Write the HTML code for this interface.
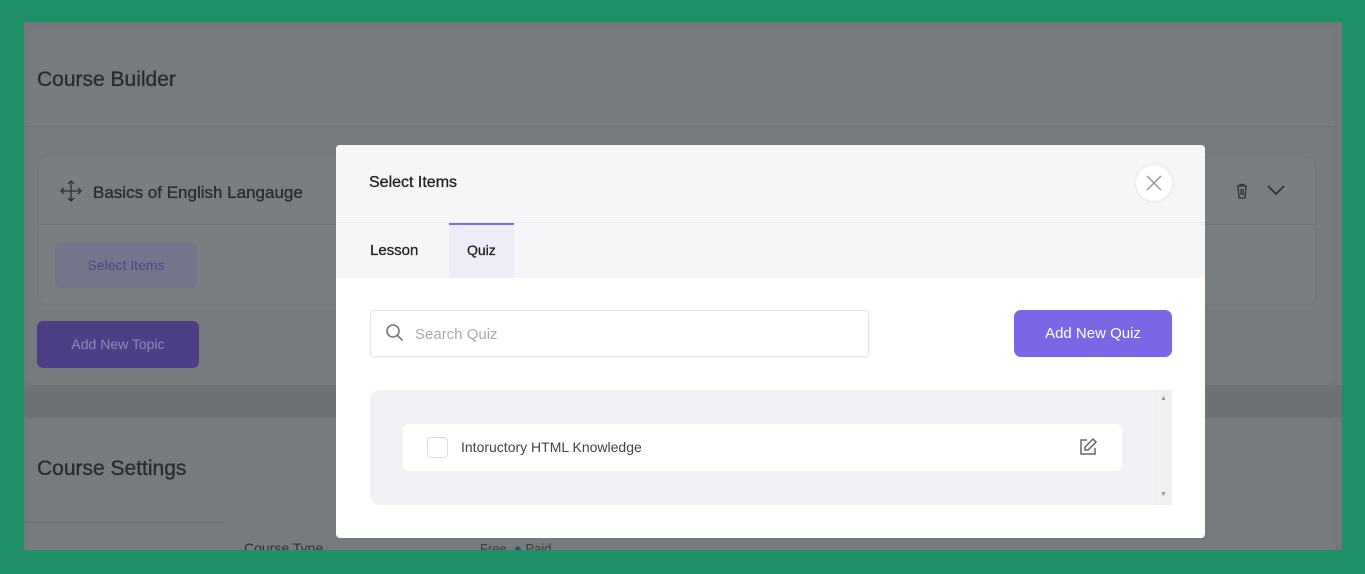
<!DOCTYPE html>
<html><head><style>
*{box-sizing:border-box;margin:0;padding:0}
body{width:1365px;height:574px;background:#20906a;position:relative;overflow:hidden;font-family:"Liberation Sans",sans-serif}
.page{position:absolute;left:24px;top:22px;width:1318px;height:528px;background:#75787b;overflow:hidden}
.abs{position:absolute}
.card{position:absolute;background:#7a7d80;border-radius:8px}
.t{position:absolute;color:#2a2c30;-webkit-text-stroke:0.35px #2a2c30}
.modal{position:absolute;left:336px;top:145px;width:869px;height:393px;background:#fff;border-radius:4px;overflow:hidden}
</style></head><body>
<div class="page">
  <div class="card" style="left:4px;top:6px;width:1306px;height:357px;background:#787b7e"></div>
  <div class="abs" style="left:0;top:104px;width:1310px;height:1px;background:#6f7275"></div>
  <div class="t" style="left:13px;top:46px;font-size:21px;">Course Builder</div>
  <div class="card" style="left:14px;top:135px;width:1278px;height:148px;background:#7b7e81;border:1px solid #72757a"></div>
  <div class="abs" style="left:14px;top:202px;width:1278px;height:1px;background:#72757a"></div>
  <svg class="abs" style="left:36px;top:158px" width="22" height="22" viewBox="0 0 22 22" fill="none" stroke="#2e3034" stroke-width="1.3"><path d="M11 1v20M1 11h20M8 4l3-3 3 3M8 18l3 3 3-3M4 8l-3 3 3 3M18 8l3 3-3 3"/></svg>
  <div class="t" style="left:69px;top:161px;font-size:17px;">Basics of English Langauge</div>
  <div class="abs" style="left:31px;top:220px;width:142px;height:46px;background:#73758a;border-radius:6px;color:#4b4a86;font-size:14px;text-align:center;line-height:46px">Select Items</div>
  <div class="abs" style="left:13px;top:299px;width:162px;height:47px;background:#4b3f86;border-radius:6px;color:#8d88b5;font-size:14px;text-align:center;line-height:47px">Add New Topic</div>
  <svg class="abs" style="left:1211px;top:161px" width="14" height="16" viewBox="0 0 14 16" fill="none" stroke="#2e3034" stroke-width="1.3"><path d="M2 3h10M5 3V1.5h4V3M3 3l1 12h6l1-12M6 6v6M8 6v6"/></svg>
  <svg class="abs" style="left:1242px;top:162px" width="20" height="12" viewBox="0 0 20 12" fill="none" stroke="#2e3034" stroke-width="1.8"><path d="M2 2l8 8 8-8"/></svg>
  <div class="abs" style="left:0;top:363px;width:1318px;height:33px;background:#6f7275"></div>
  <div class="card" style="left:4px;top:396px;width:1306px;height:140px;background:#787b7e"></div>
  <div class="t" style="left:13px;top:435px;font-size:21px;">Course Settings</div>
  <div class="abs" style="left:0;top:500px;width:200px;height:1px;background:#6c6f72"></div>
  <div class="t" style="left:220px;top:518px;font-size:14px;color:#2e3034;-webkit-text-stroke:0">Course Type</div>
  <div class="t" style="left:456px;top:519px;font-size:13px;color:#3a3c40;-webkit-text-stroke:0">Free &nbsp;<span style="color:#2d4b78">●</span> Paid</div>
</div>
<div class="modal">
  <div class="abs" style="left:0;top:0;width:869px;height:133px;background:#f5f6f8"></div>
  <div class="abs" style="left:0;top:77px;width:869px;height:1px;background:#eaebef"></div>
  <div class="abs" style="left:33px;top:29px;font-size:16px;color:#222;-webkit-text-stroke:0.3px #222">Select Items</div>
  <div class="abs" style="left:800px;top:20px;width:36px;height:36px;border-radius:50%;background:#fff;box-shadow:0 0 3px rgba(0,0,0,.12)"></div>
  <svg class="abs" style="left:809px;top:29px" width="18" height="18" viewBox="0 0 18 18" stroke="#999" stroke-width="1.5"><path d="M2 2l14 14M16 2L2 16"/></svg>
  <div class="abs" style="left:113px;top:78px;width:65px;height:55px;background:#eeedf7;border-top:2px solid #7e6be0"></div>
  <div class="abs" style="left:34px;top:97px;font-size:15px;color:#222;-webkit-text-stroke:0.3px #222">Lesson</div>
  <div class="abs" style="left:131px;top:97px;font-size:14px;color:#222;-webkit-text-stroke:0.3px #222">Quiz</div>
  <div class="abs" style="left:34px;top:165px;width:499px;height:47px;border:1px solid #e3e4e8;border-radius:4px;box-shadow:0 1px 2px rgba(0,0,0,.05)"></div>
  <svg class="abs" style="left:49px;top:178px" width="20" height="20" viewBox="0 0 20 20" fill="none" stroke="#777" stroke-width="1.6"><circle cx="8" cy="8" r="6"/><path d="M12.5 12.5l5 5"/></svg>
  <div class="abs" style="left:79px;top:181px;font-size:15px;color:#aaa">Search Quiz</div>
  <div class="abs" style="left:678px;top:165px;width:158px;height:47px;background:#7b67e5;border-radius:7px;color:#fff;font-size:15px;text-align:center;line-height:47px">Add New Quiz</div>
  <div class="abs" style="left:34px;top:245px;width:802px;height:115px;background:#f1f2f6;border-radius:10px 0 0 10px"></div>
  <div class="abs" style="left:819px;top:245px;width:17px;height:115px;background:#f0f0f0"></div>
  <div class="abs" style="left:824px;top:250px;font-size:7px;color:#999">▲</div>
  <div class="abs" style="left:824px;top:346px;font-size:7px;color:#999">▼</div>
  <div class="abs" style="left:67px;top:279px;width:719px;height:47px;background:#fff;border-radius:6px"></div>
  <div class="abs" style="left:91px;top:292px;width:21px;height:21px;border:1px solid #ddd;border-radius:4px"></div>
  <div class="abs" style="left:125px;top:294px;font-size:14px;color:#444">Intoructory HTML Knowledge</div>
  <svg class="abs" style="left:742px;top:292px" width="20" height="20" viewBox="0 0 20 20" fill="none" stroke="#666" stroke-width="1.5"><path d="M9 3H3v14h14v-6"/><path d="M15 2l3 3-8 8H7v-3z"/></svg>
</div>
</body></html>
